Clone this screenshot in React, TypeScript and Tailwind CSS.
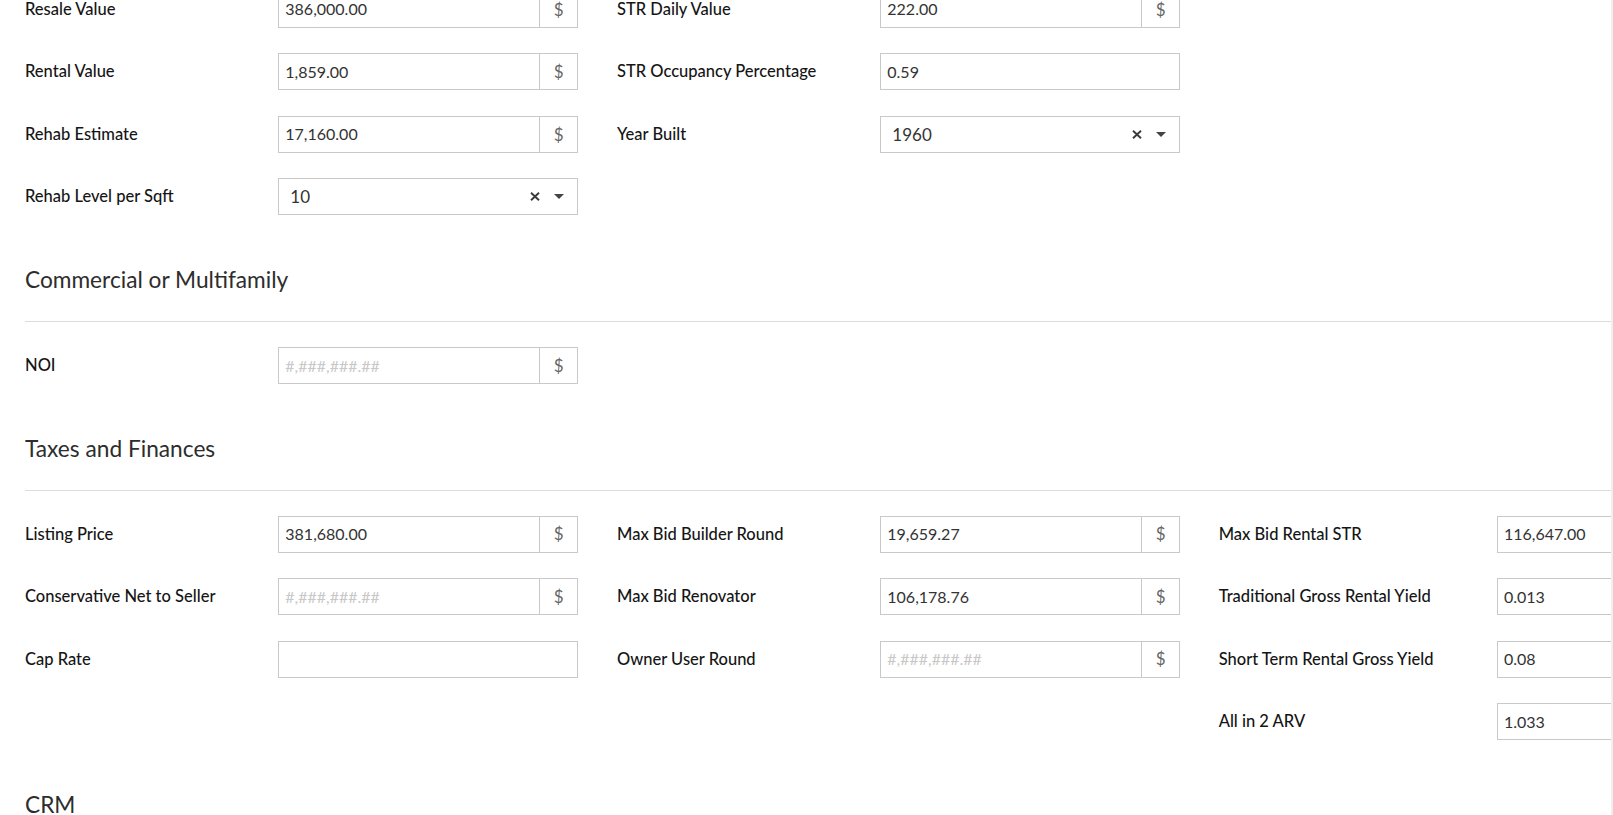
import React from "react"

type Field = {
  label: string
  value?: string
  placeholder?: string
  addon?: boolean
  select?: boolean
}

const PH = "#,###,###.##"

const basics: Field[][] = [
  [
    { label: "Resale Value", value: "386,000.00", addon: true },
    { label: "Rental Value", value: "1,859.00", addon: true },
    { label: "Rehab Estimate", value: "17,160.00", addon: true },
    { label: "Rehab Level per Sqft", value: "10", select: true },
  ],
  [
    { label: "STR Daily Value", value: "222.00", addon: true },
    { label: "STR Occupancy Percentage", value: "0.59" },
    { label: "Year Built", value: "1960", select: true },
  ],
  [],
]

const commercial: Field[][] = [[{ label: "NOI", placeholder: PH, addon: true }], [], []]

const taxes: Field[][] = [
  [
    { label: "Listing Price", value: "381,680.00", addon: true },
    { label: "Conservative Net to Seller", placeholder: PH, addon: true },
    { label: "Cap Rate" },
  ],
  [
    { label: "Max Bid Builder Round", value: "19,659.27", addon: true },
    { label: "Max Bid Renovator", value: "106,178.76", addon: true },
    { label: "Owner User Round", placeholder: PH, addon: true },
  ],
  [
    { label: "Max Bid Rental STR", value: "116,647.00" },
    { label: "Traditional Gross Rental Yield", value: "0.013" },
    { label: "Short Term Rental Gross Yield", value: "0.08" },
    { label: "All in 2 ARV", value: "1.033" },
  ],
]

function ClearIcon() {
  return (
    <svg width="10" height="9" viewBox="0 0 10 9" className="shrink-0">
      <path d="M1 0.8 L9 8.2 M9 0.8 L1 8.2" stroke="#3a3a3a" strokeWidth="1.9" fill="none" />
    </svg>
  )
}

function CaretIcon() {
  return (
    <svg width="10" height="5" viewBox="0 0 10 5" className="shrink-0">
      <polygon points="0,0 10,0 5,5" fill="#444" />
    </svg>
  )
}

function Control({ f }: { f: Field }) {
  if (f.select) {
    return (
      <div className="flex h-[37px] w-[300px] shrink-0 items-center border border-[#c9c9c9] bg-white pl-[11px] pr-[13px]">
        <span className="flex-1 text-[17px] text-[#333]">{f.value}</span>
        <ClearIcon />
        <span className="ml-[14px] flex">
          <CaretIcon />
        </span>
      </div>
    )
  }
  return (
    <div className="flex h-[37px] w-[300px] shrink-0 border border-[#c9c9c9] bg-white">
      <input
        readOnly
        value={f.value ?? ""}
        placeholder={f.placeholder}
        className="min-w-0 flex-1 bg-transparent px-[6px] text-[16px] text-[#333] outline-none placeholder:text-[#c8c8c8]"
      />
      {f.addon && (
        <div className="flex w-[38px] shrink-0 items-center justify-center border-l border-[#c9c9c9] text-[17px] text-[#666]">
          $
        </div>
      )}
    </div>
  )
}

const colWidths = ["w-[592px]", "w-[601.7px]", "w-[420px]"]
const labelWidths = ["w-[253.3px]", "w-[263.3px]", "w-[278.3px]"]

function FieldGrid({ cols }: { cols: Field[][] }) {
  return (
    <div className="flex pl-[25px]">
      {cols.map((col, ci) => (
        <div key={ci} className={`flex shrink-0 flex-col gap-[25.5px] ${colWidths[ci]}`}>
          {col.map((f) => (
            <div key={f.label} className="flex h-[37px] items-center">
              <div className={`shrink-0 pb-[0.5px] text-[16.5px] font-medium text-[#151515] ${labelWidths[ci]}`}>
                {f.label}
              </div>
              <Control f={f} />
            </div>
          ))}
        </div>
      ))}
    </div>
  )
}

function SectionTitle({ title, rule = true }: { title: string; rule?: boolean }) {
  return (
    <div className="mt-[52.5px]">
      <h2 className="pl-[25px] text-[22.7px] leading-[24.2px] text-[#2d2d2d]">{title}</h2>
      {rule && <div className="ml-[25px] mt-[29px] h-px bg-[#dddddd]" />}
    </div>
  )
}

export default function App() {
  return (
    <div className="flex h-[815px] w-full overflow-hidden bg-white font-[Lato,sans-serif]">
      <div className="w-[1611px] shrink-0 overflow-hidden">
        <div className="-mt-[9.2px]">
          <FieldGrid cols={basics} />

          <SectionTitle title="Commercial or Multifamily" />
          <div className="mt-[25px]">
            <FieldGrid cols={commercial} />
          </div>

          <div className="mt-[1px]">
            <SectionTitle title="Taxes and Finances" />
          </div>
          <div className="mt-[25px]">
            <FieldGrid cols={taxes} />
          </div>

          <div className="mt-[6px]">
            <SectionTitle title="CRM" rule={false} />
          </div>
        </div>
      </div>
      <div className="w-[2px] shrink-0 bg-[#efefef]" />
    </div>
  )
}
